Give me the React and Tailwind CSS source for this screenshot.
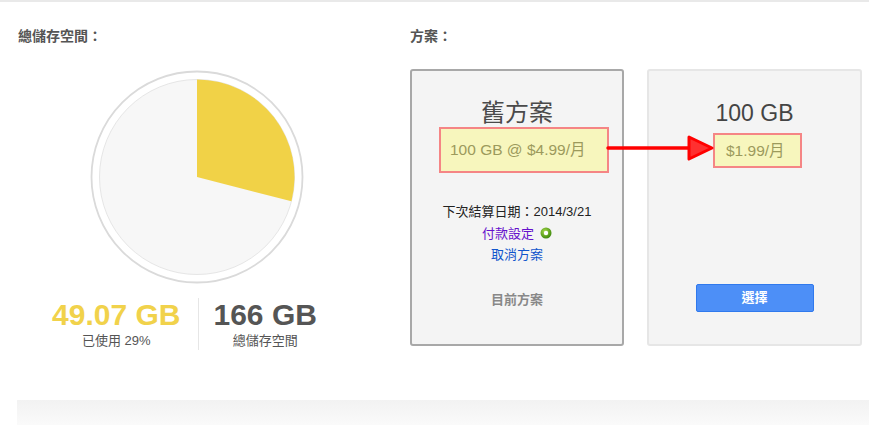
const font = { fontFamily: '"Liberation Sans", Arial, "Noto Sans CJK TC", sans-serif' };

function Pie() {
  return (
    <svg width="214" height="214" viewBox="0 0 214 214">
      <circle cx="107" cy="107" r="105.5" fill="#ffffff" stroke="#dadada" strokeWidth="1.8" />
      <circle cx="107" cy="107" r="97.5" fill="#f7f7f7" stroke="#e6e6e6" strokeWidth="1" />
      <path d="M107 107 L107 9.5 A97.5 97.5 0 0 1 201.44 131.25 Z" fill="#f1d247" />
    </svg>
  );
}

function GreenDot() {
  return (
    <svg width="12" height="12" viewBox="0 0 12 12" className="inline-block ml-[6px] align-[-1px]">
      <defs>
        <radialGradient id="g" cx="40%" cy="35%" r="65%">
          <stop offset="0%" stopColor="#a6d84a" />
          <stop offset="100%" stopColor="#3f8a0c" />
        </radialGradient>
      </defs>
      <circle cx="6" cy="6" r="5.5" fill="url(#g)" />
      <circle cx="6" cy="6" r="2.2" fill="#ffffff" />
    </svg>
  );
}

function Arrow() {
  return (
    <svg
      width="110"
      height="28"
      viewBox="0 0 110 28"
      className="absolute left-[606px] top-[134px]"
    >
      <line x1="2" y1="14" x2="86" y2="14" stroke="#ff0000" strokeWidth="3.5" strokeLinecap="round" />
      <polygon
        points="83,3 106,14 83,25"
        fill="#ff3030"
        stroke="#ff0000"
        strokeWidth="3"
        strokeLinejoin="round"
      />
    </svg>
  );
}

export default function App() {
  return (
    <div className="relative w-[869px] h-[425px] overflow-hidden bg-white" style={font}>
      <div className="h-[2px] bg-[#e9e9e9]" />
      <div className="flex h-[398px]">
        {/* storage */}
        <div className="w-[392px] pl-[18px] pt-[24px]">
          <div className="w-[358px]">
            <h2 className="text-[14px] leading-[20px] font-bold text-[#555]">總儲存空間：</h2>
            <div className="flex justify-center mt-[24px]">
              <Pie />
            </div>
            <div className="flex mt-[14px] h-[52px]">
              <div className="flex-1 flex justify-end pr-[17px]">
                <div className="text-center">
                  <div className="text-[30px] leading-[34px] font-bold text-[#f1d24b]">49.07 GB</div>
                  <div className="text-[13px] leading-[18px] text-[#555]">已使用 29%</div>
                </div>
              </div>
              <div className="w-px bg-[#e6e6e6]" />
              <div className="flex-1 flex justify-start pl-[15px]">
                <div className="text-center">
                  <div className="text-[30px] leading-[34px] font-bold text-[#555]">166 GB</div>
                  <div className="text-[13px] leading-[18px] text-[#555]">總儲存空間</div>
                </div>
              </div>
            </div>
          </div>
        </div>

        {/* plans */}
        <div className="pl-[18px] pt-[24px]">
          <h2 className="text-[14px] leading-[20px] font-bold text-[#555]">方案：</h2>
          <div className="flex gap-[23px] mt-[23px]">
            <div className="w-[214px] h-[277px] border-2 border-[#a8a8a8] rounded-[3px] bg-[#f4f4f4] flex flex-col">
              <div className="pt-[28px] text-center text-[24px] leading-[28px] text-[#4a4a4a]">舊方案</div>
              <div className="ml-[27px] w-[170px] h-[46px] border-2 border-[#f58585] bg-[#f7f6bd] flex items-center pl-[9px] text-[15.5px] text-[#9c9a5c]">
                100 GB @ $4.99/月
              </div>
              <div className="mt-[28px] text-center text-[13px] leading-[21.5px]">
                <div className="text-[#222]">下次結算日期：2014/3/21</div>
                <div className="text-[#6611cc]">
                  付款設定
                  <GreenDot />
                </div>
                <div className="text-[#1155cc]">取消方案</div>
              </div>
              <div className="mt-[24px] text-center text-[13px] leading-[20px] font-bold text-[#888]">目前方案</div>
            </div>

            <div className="w-[215px] h-[277px] border-2 border-[#e6e6e6] rounded-[3px] bg-[#f4f4f4] flex flex-col">
              <div className="pt-[28px] text-center text-[23px] leading-[28px] text-[#444]">100 GB</div>
              <div className="mt-[6px] ml-[64px] w-[89px] h-[35px] border-2 border-[#f58585] bg-[#f7f6bd] flex items-center pl-[11px] text-[15.5px] text-[#9c9a5c]">
                $1.99/月
              </div>
              <div className="flex justify-center mt-[116px]">
                <button className="w-[118px] h-[28px] rounded-[2px] border border-[#3079ed] bg-[#4d8ff7] text-white text-[13px] font-bold">
                  選擇
                </button>
              </div>
            </div>
          </div>
        </div>
      </div>
      <div className="ml-[17px] h-[40px] bg-gradient-to-b from-[#f2f2f2] to-white" />
      <Arrow />
    </div>
  );
}
